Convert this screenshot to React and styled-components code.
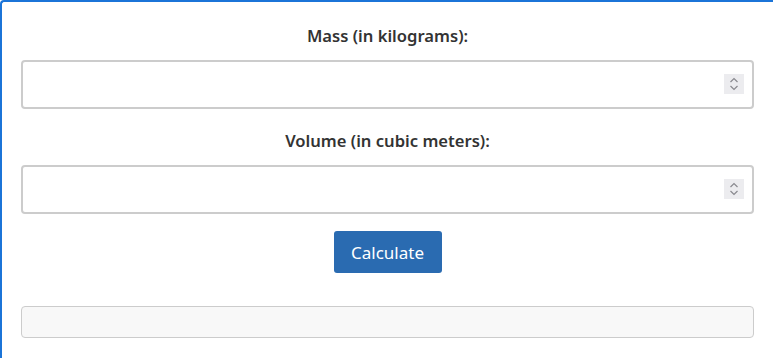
import styled, { createGlobalStyle } from "styled-components";

const GlobalStyle = createGlobalStyle`
  html, body {
    margin: 0;
    padding: 0;
    background: #ffffff;
    overflow: hidden;
  }
  body {
    font-family: "Noto Sans", "Open Sans", sans-serif;
    color: #333333;
  }
`;

const Card = styled.div`
  box-sizing: border-box;
  width: 773px;
  height: 358px;
  border-top: 2px solid #1b74d8;
  border-left: 2px solid #1b74d8;
  border-top-left-radius: 4px;
  padding: 22px 19px 0 19px;
  display: flex;
  flex-direction: column;
  align-items: stretch;
`;

const Label = styled.label`
  display: block;
  text-align: center;
  font-size: 16.6px;
  font-weight: 600;
  line-height: 24px;
  color: #333333;
  margin-top: ${(p) => p.$top || 0}px;
`;

const Field = styled.div`
  position: relative;
  margin-top: 12px;
`;

const Input = styled.input`
  box-sizing: border-box;
  width: 100%;
  height: 49px;
  border: 2px solid #cccccc;
  border-radius: 4px;
  padding: 0 12px;
  font-size: 16px;
  font-family: inherit;
  background: #ffffff;
  outline: none;
  -moz-appearance: textfield;
  &::-webkit-inner-spin-button,
  &::-webkit-outer-spin-button {
    -webkit-appearance: none;
    margin: 0;
  }
`;

const Spinner = styled.div`
  position: absolute;
  right: 10px;
  top: 14px;
  width: 20px;
  height: 20px;
  background: #ececef;
  display: flex;
  align-items: center;
  justify-content: center;
`;

const ButtonRow = styled.div`
  display: flex;
  justify-content: center;
  margin-top: 17px;
`;

const Button = styled.button`
  box-sizing: border-box;
  width: 108px;
  height: 42px;
  background: #2a6bb1;
  color: #ffffff;
  border: none;
  border-radius: 3px;
  font-family: inherit;
  font-size: 17px;
  cursor: pointer;
`;

const Result = styled.div`
  box-sizing: border-box;
  margin-top: 33px;
  height: 32px;
  background: #f8f8f8;
  border: 1px solid #cccccc;
  border-radius: 4px;
`;

function SpinIcon() {
  return (
    <svg width="12" height="16" viewBox="0 0 12 16" fill="none">
      <path d="M2.5 6 L6 2.5 L9.5 6" stroke="#8a8a8f" strokeWidth="1.2" />
      <path d="M2.5 10 L6 13.5 L9.5 10" stroke="#8a8a8f" strokeWidth="1.2" />
    </svg>
  );
}

function NumberField({ id }) {
  return (
    <Field>
      <Input id={id} type="number" />
      <Spinner>
        <SpinIcon />
      </Spinner>
    </Field>
  );
}

export default function App() {
  return (
    <>
      <GlobalStyle />
      <Card>
        <Label htmlFor="mass">Mass (in kilograms):</Label>
        <NumberField id="mass" />
        <Label htmlFor="volume" $top={20}>
          Volume (in cubic meters):
        </Label>
        <NumberField id="volume" />
        <ButtonRow>
          <Button>Calculate</Button>
        </ButtonRow>
        <Result />
      </Card>
    </>
  );
}
